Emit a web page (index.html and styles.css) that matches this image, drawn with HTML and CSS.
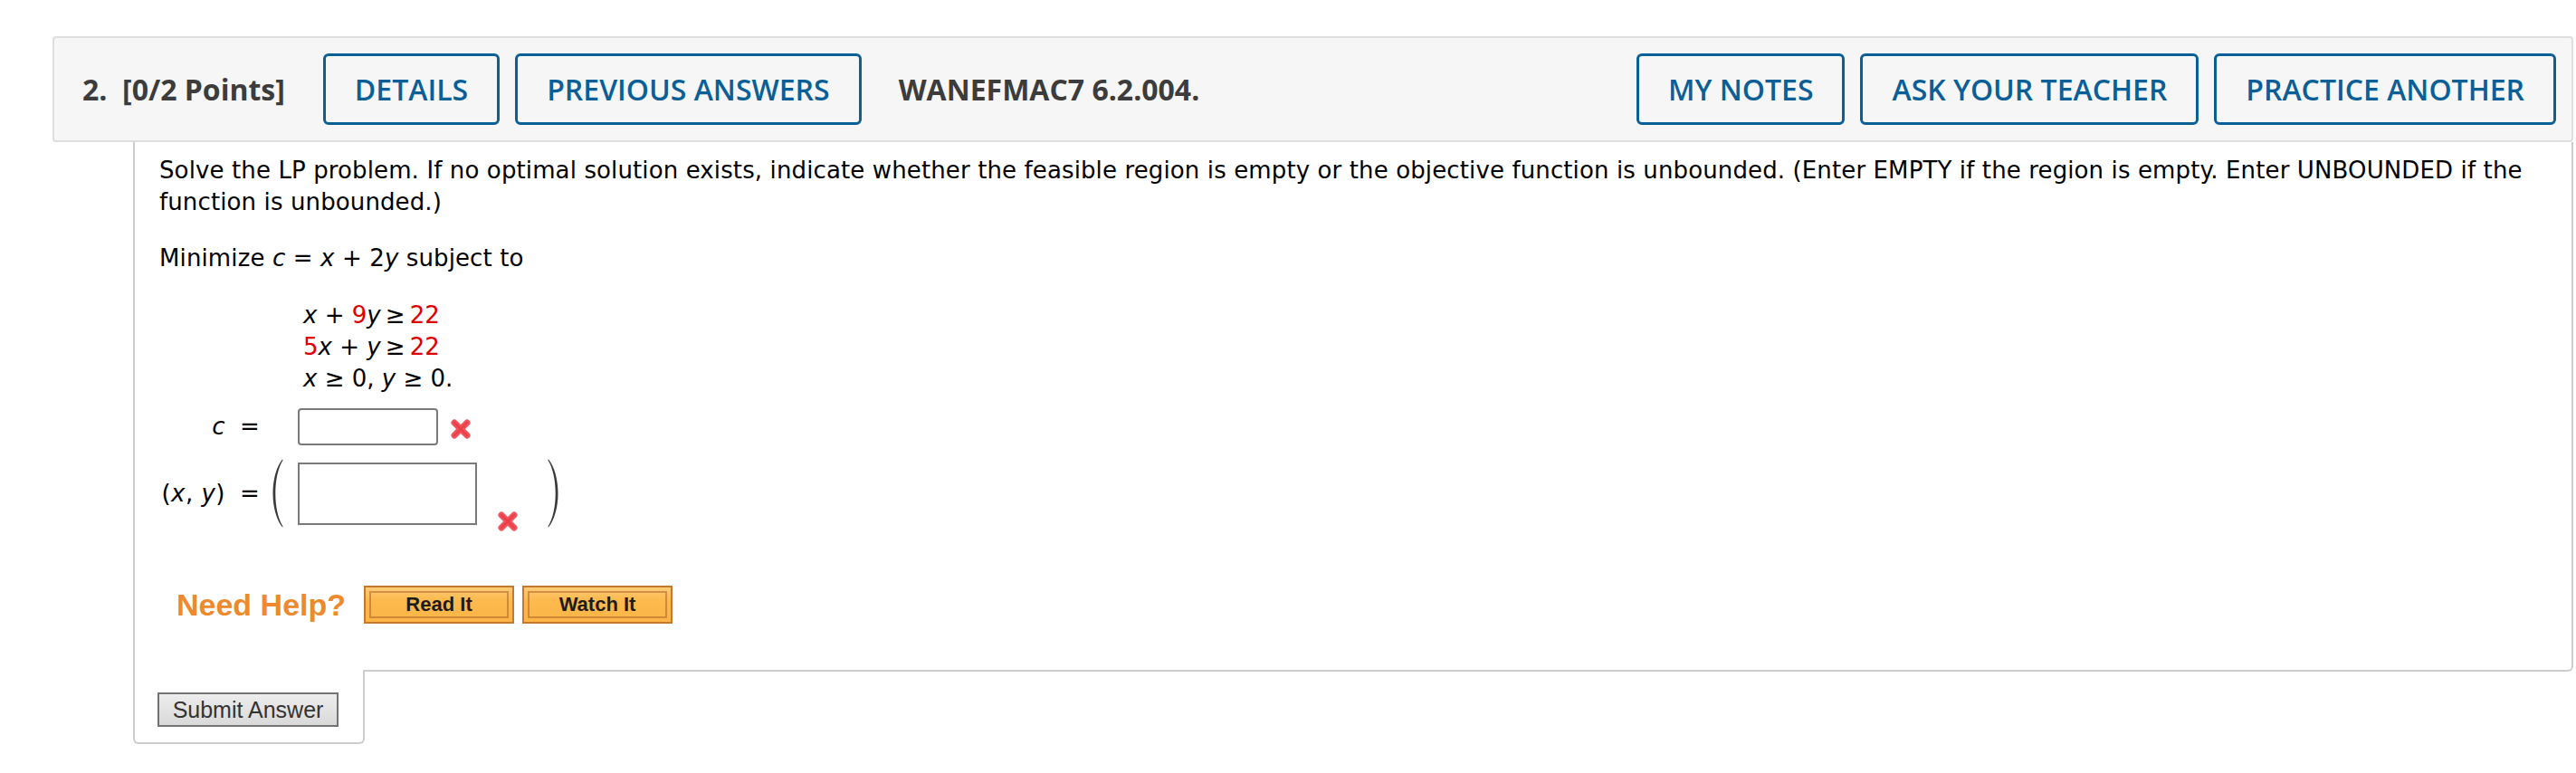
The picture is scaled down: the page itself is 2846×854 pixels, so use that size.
FILE: index.html
```html
<!DOCTYPE html>
<html lang="en">
<head>
<meta charset="utf-8">
<title>Question 2</title>
<link rel="stylesheet" href="styles.css">
</head>
<body>
<div class="page">
  <div class="qhead">
    <div class="qnum">2.&nbsp; [0/2 Points]</div>
    <button class="hbtn first">DETAILS</button>
    <button class="hbtn">PREVIOUS ANSWERS</button>
    <div class="qcode">WANEFMAC7 6.2.004.</div>
    <div class="spacer"></div>
    <button class="hbtn">MY NOTES</button>
    <button class="hbtn">ASK YOUR TEACHER</button>
    <button class="hbtn">PRACTICE ANOTHER</button>
  </div>

  <div class="qbody">
    <p class="para">Solve the LP problem. If no optimal solution exists, indicate whether the feasible region is empty or the objective function is unbounded. (Enter EMPTY if the region is empty. Enter UNBOUNDED if the function is unbounded.)</p>
    <p class="para">Minimize <i>c</i> = <i>x</i> + 2<i>y</i> subject to</p>
    <div class="cons">
      <div><i>x</i> + <span class="red">9</span><i>y</i>&#8201;≥&#8201;<span class="red">22</span></div>
      <div><span class="red">5</span><i>x</i> + <i>y</i>&#8201;≥&#8201;<span class="red">22</span></div>
      <div><i>x</i> ≥ 0, <i>y</i> ≥ 0.</div>
    </div>

    <div class="ans">
      <div class="arow r1">
        <div class="lbl"><i>c</i></div>
        <div class="eq">=</div>
        <div class="pcell"></div>
        <input class="box small" type="text" aria-label="c">
        <svg class="xmark x1" viewBox="0 0 26 26" width="26" height="26"><path d="M6 6 L20 20 M20 6 L6 20" stroke="#f0545c" stroke-width="7" stroke-linecap="round"/><path d="M6 6 L20 20 M20 6 L6 20" stroke="#e9343f" stroke-width="2.5" stroke-linecap="round" opacity="0.6"/></svg>
      </div>
      <div class="arow r2">
        <div class="lbl">(<i>x</i>, <i>y</i>)</div>
        <div class="eq">=</div>
        <svg class="pcell paren" viewBox="0 0 17 76" width="17" height="76"><path d="M16 0.5 C2 18 2 58 16 75.5 L16.6 74.8 C5.5 57 5.5 19 16.6 1.2 Z" fill="#3a3a3a"/></svg>
        <input class="box big" type="text" aria-label="(x, y)">
        <svg class="xmark x2" viewBox="0 0 26 26" width="26" height="26"><path d="M6 6 L20 20 M20 6 L6 20" stroke="#f0545c" stroke-width="7" stroke-linecap="round"/><path d="M6 6 L20 20 M20 6 L6 20" stroke="#e9343f" stroke-width="2.5" stroke-linecap="round" opacity="0.6"/></svg>
        <svg class="paren rparen" viewBox="0 0 17 76" width="17" height="76"><path d="M1 0.5 C15 18 15 58 1 75.5 L0.4 74.8 C11.5 57 11.5 19 0.4 1.2 Z" fill="#3a3a3a"/></svg>
      </div>
    </div>

    <div class="help">
      <span class="needhelp">Need Help?</span>
      <button class="hlp">Read It</button>
      <button class="hlp">Watch It</button>
    </div>
  </div>
  <div class="tab">
    <button class="submit">Submit Answer</button>
  </div>
</div>
</body>
</html>
```

FILE: styles.css
```css
html, body {
  margin: 0;
  padding: 0;
  background: #ffffff;
}

.page {
  margin: 40px 0 0 58px;
  width: 2785px;
}

/* ---------- header ---------- */
.qhead {
  display: flex;
  align-items: center;
  height: 117px;
  box-sizing: border-box;
  padding: 0 17px 0 31px;
  background: #f6f6f6;
  border: 2px solid #dedede;
  border-radius: 4px;
  font-family: "Open Sans", "Liberation Sans", sans-serif;
}

.qnum, .qcode {
  font-size: 32px;
  font-weight: 700;
  color: #3c3c3c;
  white-space: nowrap;
}

.qcode {
  margin-left: 41px;
}

.spacer {
  flex: 1;
}

.hbtn {
  height: 79px;
  box-sizing: border-box;
  padding: 0 32px;
  margin-left: 17px;
  border: 3px solid #0b5f97;
  border-radius: 6px;
  background: #f6f6f6;
  color: #0b5f97;
  font-family: "Open Sans", "Liberation Sans", sans-serif;
  font-size: 32px;
  font-weight: 600;
  white-space: nowrap;
  cursor: pointer;
}

.hbtn.first {
  margin-left: 42px;
}

/* ---------- question body ---------- */
.qbody {
  margin-left: 89px;
  border: 2px solid #cccccc;
  border-top: none;
  border-bottom-right-radius: 6px;
  padding: 14px 30px 51px 27px;
  font-family: "DejaVu Sans", Verdana, sans-serif;
  font-size: 26px;
  line-height: 35px;
  color: #000;
}

.para {
  margin: 0 0 27px 0;
  letter-spacing: 0.12px;
}

.red {
  color: #dd0000;
}

.cons {
  margin: 28px 0 0 159px;
}

/* ---------- answer rows ---------- */
.ans {
  margin-top: 15px;
}

.arow {
  display: flex;
  align-items: center;
}

.arow.r2 {
  margin-top: 15px;
}

.lbl {
  width: 73px;
  flex: none;
  text-align: right;
  white-space: nowrap;
  letter-spacing: 0.5px;
}

.eq {
  margin-left: 16px;
  width: 22px;
  flex: none;
}

.pcell {
  width: 17px;
  margin-left: 9px;
  flex: none;
}

.box {
  margin-left: 16px;
  flex: none;
  box-sizing: border-box;
  border: 2px solid #7a7a7a;
  background: #fff;
  padding: 0 6px;
  font-size: 20px;
}

.box.small {
  width: 155px;
  height: 41px;
  border-radius: 4px;
}

.box.big {
  width: 198px;
  height: 69px;
  border-radius: 0;
}

.xmark {
  flex: none;
}

.x1 {
  margin-left: 12px;
  margin-top: 4px;
}

.x2 {
  margin-left: 21px;
  align-self: flex-end;
  margin-bottom: -6px;
}

.rparen {
  margin-left: 31px;
  flex: none;
}

/* ---------- help ---------- */
.help {
  display: flex;
  align-items: center;
  margin-top: 64px;
  padding-left: 19px;
}

.needhelp {
  font-family: "Liberation Sans", Arial, sans-serif;
  font-weight: 700;
  font-size: 34px;
  color: #ee8a2d;
  margin-right: 20px;
}

.hlp {
  width: 166px;
  height: 42px;
  margin-right: 9px;
  box-sizing: border-box;
  border: 2px solid #c8782c;
  background: linear-gradient(#fecb78 0%, #fdba4e 35%, #fbb446 100%);
  outline: 2px solid rgba(170, 100, 40, 0.55);
  outline-offset: -8px;
  font-family: "Liberation Sans", Arial, sans-serif;
  font-weight: 700;
  font-size: 22px;
  color: #1c1c1c;
  padding: 0;
  cursor: pointer;
}

/* ---------- submit tab ---------- */
.tab {
  margin: -2px 0 0 89px;
  width: 256px;
  box-sizing: border-box;
  background: #fff;
  border: 2px solid #cccccc;
  border-top: none;
  border-radius: 0 0 6px 6px;
  padding: 25px 0 17px 25px;
}

.submit {
  width: 200px;
  height: 38px;
  box-sizing: border-box;
  border: 2px solid #737373;
  background: linear-gradient(#ededed, #d9d9d9);
  font-family: "Liberation Sans", Arial, sans-serif;
  font-size: 25px;
  color: #333;
  padding: 0;
  cursor: pointer;
}
```
